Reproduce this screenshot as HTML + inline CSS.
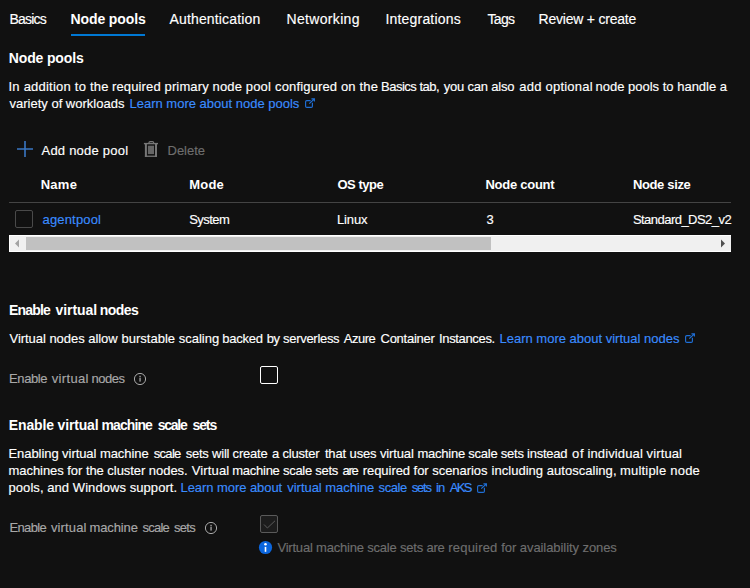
<!DOCTYPE html>
<html><head><meta charset="utf-8">
<style>
html,body{margin:0;padding:0;}
body{width:750px;height:588px;background:#111111;position:relative;overflow:hidden;font-family:"Liberation Sans",sans-serif;}
.t{position:absolute;white-space:nowrap;}
.r{-webkit-text-stroke:0.15px currentColor;}
.abs{position:absolute;}
</style></head><body>
<div class="t r" style="left:9.50px;top:11.70px;font-size:14px;line-height:14px;font-weight:400;color:#ffffff;letter-spacing:-0.800px">Basics</div>
<div class="t" style="left:70.50px;top:11.70px;font-size:14px;line-height:14px;font-weight:700;color:#ffffff;letter-spacing:-0.111px">Node pools</div>
<div class="t r" style="left:169.50px;top:11.70px;font-size:14px;line-height:14px;font-weight:400;color:#ffffff;letter-spacing:0.154px">Authentication</div>
<div class="t r" style="left:286.50px;top:11.70px;font-size:14px;line-height:14px;font-weight:400;color:#ffffff;letter-spacing:0.333px">Networking</div>
<div class="t r" style="left:385.50px;top:11.70px;font-size:14px;line-height:14px;font-weight:400;color:#ffffff;letter-spacing:0.182px">Integrations</div>
<div class="t r" style="left:487.50px;top:11.70px;font-size:14px;line-height:14px;font-weight:400;color:#ffffff;letter-spacing:-0.667px">Tags</div>
<div class="t r" style="left:538.50px;top:11.70px;font-size:14px;line-height:14px;font-weight:400;color:#ffffff;letter-spacing:-0.214px">Review + create</div>
<div class="t" style="left:8.80px;top:50.60px;font-size:14px;line-height:14px;font-weight:700;color:#ffffff;letter-spacing:-0.144px">Node pools</div>
<div class="t r" style="left:8.50px;top:80.00px;font-size:13px;line-height:13px;font-weight:400;color:#ffffff;letter-spacing:0.224px">In addition to the</div>
<div class="t r" style="left:112.00px;top:80.00px;font-size:13px;line-height:13px;font-weight:400;color:#ffffff;letter-spacing:0.136px">required primary node pool</div>
<div class="t r" style="left:275.10px;top:80.00px;font-size:13px;line-height:13px;font-weight:400;color:#ffffff;letter-spacing:0.144px">configured on the</div>
<div class="t r" style="left:381.10px;top:80.00px;font-size:13px;line-height:13px;font-weight:400;color:#ffffff;letter-spacing:-0.510px">Basics tab,</div>
<div class="t r" style="left:443.70px;top:80.00px;font-size:13px;line-height:13px;font-weight:400;color:#ffffff;letter-spacing:-0.191px">you can also</div>
<div class="t r" style="left:519.30px;top:80.00px;font-size:13px;line-height:13px;font-weight:400;color:#ffffff;letter-spacing:0.227px">add optional</div>
<div class="t r" style="left:595.50px;top:80.00px;font-size:13px;line-height:13px;font-weight:400;color:#ffffff;letter-spacing:0.000px">node pools to handle a</div>
<div class="t r" style="left:9.50px;top:96.50px;font-size:13px;line-height:13px;font-weight:400;color:#ffffff;letter-spacing:0.000px">variety of workloads</div>
<div class="t r" style="left:129.50px;top:96.50px;font-size:13px;line-height:13px;font-weight:400;color:#3a8cff;letter-spacing:0.000px">Learn more about node pools</div>
<div class="t r" style="left:41.50px;top:144.00px;font-size:13px;line-height:13px;font-weight:400;color:#ffffff;letter-spacing:0.225px">Add node pool</div>
<div class="t r" style="left:167.50px;top:144.00px;font-size:13px;line-height:13px;font-weight:400;color:#6e6e6e;letter-spacing:0.000px">Delete</div>
<div class="t" style="left:40.70px;top:178.00px;font-size:13px;line-height:13px;font-weight:700;color:#ffffff;letter-spacing:0.267px">Name</div>
<div class="t" style="left:189.20px;top:178.00px;font-size:13px;line-height:13px;font-weight:700;color:#ffffff;letter-spacing:0.233px">Mode</div>
<div class="t" style="left:337.50px;top:178.00px;font-size:13px;line-height:13px;font-weight:700;color:#ffffff;letter-spacing:-0.500px">OS type</div>
<div class="t" style="left:485.50px;top:178.00px;font-size:13px;line-height:13px;font-weight:700;color:#ffffff;letter-spacing:-0.267px">Node count</div>
<div class="t" style="left:632.90px;top:178.00px;font-size:13px;line-height:13px;font-weight:700;color:#ffffff;letter-spacing:-0.350px">Node size</div>
<div class="t r" style="left:42.50px;top:213.40px;font-size:13px;line-height:13px;font-weight:400;color:#3a8cff;letter-spacing:0.175px">agentpool</div>
<div class="t r" style="left:189.20px;top:213.40px;font-size:13px;line-height:13px;font-weight:400;color:#ffffff;letter-spacing:-0.540px">System</div>
<div class="t r" style="left:337.00px;top:213.40px;font-size:13px;line-height:13px;font-weight:400;color:#ffffff;letter-spacing:-0.150px">Linux</div>
<div class="t r" style="left:486.50px;top:213.40px;font-size:13px;line-height:13px;font-weight:400;color:#ffffff;letter-spacing:-1.500px">3</div>
<div class="t r" style="left:632.90px;top:213.40px;font-size:13px;line-height:13px;font-weight:400;color:#ffffff;letter-spacing:-0.529px">Standard_DS2_v2</div>
<div class="t" style="left:9.10px;top:303.00px;font-size:14px;line-height:14px;font-weight:700;color:#ffffff;letter-spacing:-0.860px">Enable</div>
<div class="t" style="left:55.50px;top:303.00px;font-size:14px;line-height:14px;font-weight:700;color:#ffffff;letter-spacing:-0.083px">virtual</div>
<div class="t" style="left:99.70px;top:303.00px;font-size:14px;line-height:14px;font-weight:700;color:#ffffff;letter-spacing:-0.550px">nodes</div>
<div class="t r" style="left:9.50px;top:332.00px;font-size:13px;line-height:13px;font-weight:400;color:#ffffff;letter-spacing:-0.039px">Virtual nodes allow</div>
<div class="t r" style="left:121.50px;top:332.00px;font-size:13px;line-height:13px;font-weight:400;color:#ffffff;letter-spacing:0.006px">burstable scaling</div>
<div class="t r" style="left:222.30px;top:332.00px;font-size:13px;line-height:13px;font-weight:400;color:#ffffff;letter-spacing:-0.260px">backed</div>
<div class="t r" style="left:266.70px;top:332.00px;font-size:13px;line-height:13px;font-weight:400;color:#ffffff;letter-spacing:-0.308px">by serverless</div>
<div class="t r" style="left:343.70px;top:332.00px;font-size:13px;line-height:13px;font-weight:400;color:#ffffff;letter-spacing:-0.475px">Azure</div>
<div class="t r" style="left:380.50px;top:332.00px;font-size:13px;line-height:13px;font-weight:400;color:#ffffff;letter-spacing:-0.262px">Container</div>
<div class="t r" style="left:439.10px;top:332.00px;font-size:13px;line-height:13px;font-weight:400;color:#ffffff;letter-spacing:-0.356px">Instances.</div>
<div class="t r" style="left:499.50px;top:332.00px;font-size:13px;line-height:13px;font-weight:400;color:#3a8cff;letter-spacing:0.000px">Learn more about virtual nodes</div>
<div class="t r" style="left:9.10px;top:372.00px;font-size:13px;line-height:13px;font-weight:400;color:#a8a8a8;letter-spacing:-0.420px">Enable</div>
<div class="t r" style="left:51.70px;top:372.00px;font-size:13px;line-height:13px;font-weight:400;color:#a8a8a8;letter-spacing:0.350px">virtual</div>
<div class="t r" style="left:91.50px;top:372.00px;font-size:13px;line-height:13px;font-weight:400;color:#a8a8a8;letter-spacing:-0.500px">nodes</div>
<div class="t" style="left:8.80px;top:418.00px;font-size:14px;line-height:14px;font-weight:700;color:#ffffff;letter-spacing:-0.154px">Enable virtual</div>
<div class="t" style="left:101.50px;top:418.00px;font-size:14px;line-height:14px;font-weight:700;color:#ffffff;letter-spacing:-0.917px">machine</div>
<div class="t" style="left:157.70px;top:418.00px;font-size:14px;line-height:14px;font-weight:700;color:#ffffff;letter-spacing:-1.225px">scale</div>
<div class="t" style="left:192.50px;top:418.00px;font-size:14px;line-height:14px;font-weight:700;color:#ffffff;letter-spacing:-1.100px">sets</div>
<div class="t r" style="left:8.50px;top:447.00px;font-size:13px;line-height:13px;font-weight:400;color:#ffffff;letter-spacing:-0.065px">Enabling virtual machine</div>
<div class="t r" style="left:153.70px;top:447.00px;font-size:13px;line-height:13px;font-weight:400;color:#ffffff;letter-spacing:-0.675px">scale</div>
<div class="t r" style="left:185.70px;top:447.00px;font-size:13px;line-height:13px;font-weight:400;color:#ffffff;letter-spacing:-0.220px">sets will create</div>
<div class="t r" style="left:272.10px;top:447.00px;font-size:13px;line-height:13px;font-weight:400;color:#ffffff;letter-spacing:-2.300px">a</div>
<div class="t r" style="left:282.50px;top:447.00px;font-size:13px;line-height:13px;font-weight:400;color:#ffffff;letter-spacing:-0.217px">cluster</div>
<div class="t r" style="left:324.90px;top:447.00px;font-size:13px;line-height:13px;font-weight:400;color:#ffffff;letter-spacing:-0.131px">that uses virtual</div>
<div class="t r" style="left:417.50px;top:447.00px;font-size:13px;line-height:13px;font-weight:400;color:#ffffff;letter-spacing:-0.244px">machine scale sets instead</div>
<div class="t r" style="left:572.10px;top:447.00px;font-size:13px;line-height:13px;font-weight:400;color:#ffffff;letter-spacing:0.700px">of</div>
<div class="t r" style="left:587.50px;top:447.00px;font-size:13px;line-height:13px;font-weight:400;color:#ffffff;letter-spacing:0.118px">individual virtual</div>
<div class="t r" style="left:8.50px;top:464.00px;font-size:13px;line-height:13px;font-weight:400;color:#ffffff;letter-spacing:-0.050px">machines for the cluster nodes.</div>
<div class="t r" style="left:191.70px;top:464.00px;font-size:13px;line-height:13px;font-weight:400;color:#ffffff;letter-spacing:0.150px">Virtual</div>
<div class="t r" style="left:232.30px;top:464.00px;font-size:13px;line-height:13px;font-weight:400;color:#ffffff;letter-spacing:-0.265px">machine scale sets</div>
<div class="t r" style="left:342.50px;top:464.00px;font-size:13px;line-height:13px;font-weight:400;color:#ffffff;letter-spacing:-1.250px">are</div>
<div class="t r" style="left:362.70px;top:464.00px;font-size:13px;line-height:13px;font-weight:400;color:#ffffff;letter-spacing:-0.043px">required for scenarios</div>
<div class="t r" style="left:491.50px;top:464.00px;font-size:13px;line-height:13px;font-weight:400;color:#ffffff;letter-spacing:0.033px">including autoscaling,</div>
<div class="t r" style="left:619.90px;top:464.00px;font-size:13px;line-height:13px;font-weight:400;color:#ffffff;letter-spacing:0.217px">multiple node</div>
<div class="t r" style="left:8.50px;top:480.50px;font-size:13px;line-height:13px;font-weight:400;color:#ffffff;letter-spacing:0.065px">pools, and Windows support.</div>
<div class="t r" style="left:180.50px;top:480.50px;font-size:13px;line-height:13px;font-weight:400;color:#3a8cff;letter-spacing:-0.060px">Learn more about</div>
<div class="t r" style="left:287.30px;top:480.50px;font-size:13px;line-height:13px;font-weight:400;color:#3a8cff;letter-spacing:-0.036px">virtual machine</div>
<div class="t r" style="left:378.50px;top:480.50px;font-size:13px;line-height:13px;font-weight:400;color:#3a8cff;letter-spacing:-0.375px">scale</div>
<div class="t r" style="left:411.70px;top:480.50px;font-size:13px;line-height:13px;font-weight:400;color:#3a8cff;letter-spacing:-1.167px">sets</div>
<div class="t r" style="left:435.90px;top:480.50px;font-size:13px;line-height:13px;font-weight:400;color:#3a8cff;letter-spacing:-0.900px">in</div>
<div class="t r" style="left:449.70px;top:480.50px;font-size:13px;line-height:13px;font-weight:400;color:#3a8cff;letter-spacing:-1.700px">AKS</div>
<div class="t r" style="left:9.50px;top:521.00px;font-size:13px;line-height:13px;font-weight:400;color:#a8a8a8;letter-spacing:-0.660px">Enable</div>
<div class="t r" style="left:50.90px;top:521.00px;font-size:13px;line-height:13px;font-weight:400;color:#a8a8a8;letter-spacing:0.150px">virtual</div>
<div class="t r" style="left:89.50px;top:521.00px;font-size:13px;line-height:13px;font-weight:400;color:#a8a8a8;letter-spacing:-0.117px">machine</div>
<div class="t r" style="left:142.50px;top:521.00px;font-size:13px;line-height:13px;font-weight:400;color:#a8a8a8;letter-spacing:-0.775px">scale</div>
<div class="t r" style="left:174.10px;top:521.00px;font-size:13px;line-height:13px;font-weight:400;color:#a8a8a8;letter-spacing:-0.767px">sets</div>
<div class="t r" style="left:277.40px;top:540.50px;font-size:13px;line-height:13px;font-weight:400;color:#6e6e6e;letter-spacing:-0.200px">Virtual machine scale sets are</div>
<div class="t r" style="left:448.30px;top:540.50px;font-size:13px;line-height:13px;font-weight:400;color:#6e6e6e;letter-spacing:0.186px">required</div>
<div class="t r" style="left:501.30px;top:540.50px;font-size:13px;line-height:13px;font-weight:400;color:#6e6e6e;letter-spacing:-0.071px">for availability zones</div>
<!-- tab underline -->
<div class="abs" style="left:71px;top:34px;width:74px;height:2px;background:#0078d4"></div>
<!-- external link icons -->
<svg class="abs" style="left:304px;top:95px" width="13" height="14" viewBox="0 0 13 14"><path d="M6.6 5.6H2.8Q1.6 5.6 1.6 6.8V11.2Q1.6 12.4 2.8 12.4H7.2Q8.4 12.4 8.4 11.2V7.8M5.3 8.6L10.4 3.8M7.4 3.8H10.4V6.6" fill="none" stroke="#1f6fd6" stroke-width="1.15"/></svg>
<svg class="abs" style="left:684px;top:330px" width="13" height="14" viewBox="0 0 13 14"><path d="M6.6 5.6H2.8Q1.6 5.6 1.6 6.8V11.2Q1.6 12.4 2.8 12.4H7.2Q8.4 12.4 8.4 11.2V7.8M5.3 8.6L10.4 3.8M7.4 3.8H10.4V6.6" fill="none" stroke="#1f6fd6" stroke-width="1.15"/></svg>
<svg class="abs" style="left:476px;top:480px" width="13" height="14" viewBox="0 0 13 14"><path d="M6.6 5.6H2.8Q1.6 5.6 1.6 6.8V11.2Q1.6 12.4 2.8 12.4H7.2Q8.4 12.4 8.4 11.2V7.8M5.3 8.6L10.4 3.8M7.4 3.8H10.4V6.6" fill="none" stroke="#1f6fd6" stroke-width="1.15"/></svg>



<!-- plus icon -->
<svg class="abs" style="left:16px;top:140px" width="18" height="18" viewBox="0 0 18 18"><path d="M1 9H17M9 1V17" stroke="#3a77c4" stroke-width="1.6"/></svg>
<!-- trash icon -->
<svg class="abs" style="left:140px;top:138px" width="22" height="22" viewBox="0 0 22 22">
<path d="M9 5V4.6Q9 3.6 10 3.6H12.6Q13.6 3.6 13.6 4.6V5" fill="none" stroke="#777" stroke-width="1.2"/>
<rect x="3.9" y="4.9" width="14.1" height="1.4" fill="#777"/>
<rect x="4.9" y="6" width="2" height="12.9" fill="#777"/>
<rect x="15" y="6" width="2" height="12.9" fill="#777"/>
<rect x="4.9" y="17.6" width="12.1" height="1.3" fill="#777"/>
<rect x="7.9" y="7.7" width="6.1" height="8.4" fill="#666"/>
</svg>
<!-- table header line -->
<div class="abs" style="left:9px;top:202px;width:722px;height:1px;background:#444"></div>
<!-- row checkbox -->
<div class="abs" style="left:15px;top:210px;width:16px;height:16px;border:1px solid #4a4a4a;border-radius:2px"></div>
<!-- scrollbar -->
<div class="abs" style="left:9px;top:235px;width:722px;height:17px;background:#fff"></div>
<div class="abs" style="left:10px;top:236px;width:721px;height:15px;background:#f0f0f0"></div>
<div class="abs" style="left:26px;top:237px;width:465px;height:13px;background:#c1c1c1"></div>
<svg class="abs" style="left:14px;top:239px" width="6" height="9" viewBox="0 0 6 9"><path d="M5 0.5L1 4.5L5 8.5Z" fill="#a3a3a3"/></svg>
<svg class="abs" style="left:720px;top:239px" width="6" height="9" viewBox="0 0 6 9"><path d="M1 0.5L5 4.5L1 8.5Z" fill="#505050"/></svg>
<!-- info icons -->
<svg class="abs" style="left:133px;top:372px" width="14" height="14" viewBox="0 0 14 14"><circle cx="7" cy="7" r="5.6" fill="none" stroke="#a8a8a8" stroke-width="1"/><rect x="6.4" y="5.6" width="1.3" height="4" fill="#a8a8a8"/><rect x="6.4" y="3.8" width="1.3" height="1.2" fill="#a8a8a8"/></svg>
<svg class="abs" style="left:204px;top:521px" width="14" height="14" viewBox="0 0 14 14"><circle cx="7" cy="7" r="5.6" fill="none" stroke="#a8a8a8" stroke-width="1"/><rect x="6.4" y="5.6" width="1.3" height="4" fill="#a8a8a8"/><rect x="6.4" y="3.8" width="1.3" height="1.2" fill="#a8a8a8"/></svg>
<!-- checkbox virtual nodes -->
<div class="abs" style="left:260px;top:366px;width:16px;height:16px;border:1px solid #ffffff;border-radius:2px"></div>
<!-- disabled checked checkbox -->
<div class="abs" style="left:260px;top:515px;width:16px;height:16px;border:1px solid #5a5a5a;border-radius:2px;background:#1c1c1c"></div>
<svg class="abs" style="left:260px;top:515px" width="18" height="18" viewBox="0 0 18 18"><path d="M4 9.5L7.4 13L15 5.8" fill="none" stroke="#5a5a5a" stroke-width="1"/></svg>
<!-- blue info -->
<svg class="abs" style="left:258px;top:540px" width="15" height="15" viewBox="0 0 15 15"><circle cx="7.5" cy="7.5" r="6.6" fill="#0b66de"/><rect x="6.7" y="6.9" width="1.6" height="4.9" fill="#fff"/><circle cx="7.5" cy="4.2" r="1.3" fill="#fff"/></svg>
</body></html>
